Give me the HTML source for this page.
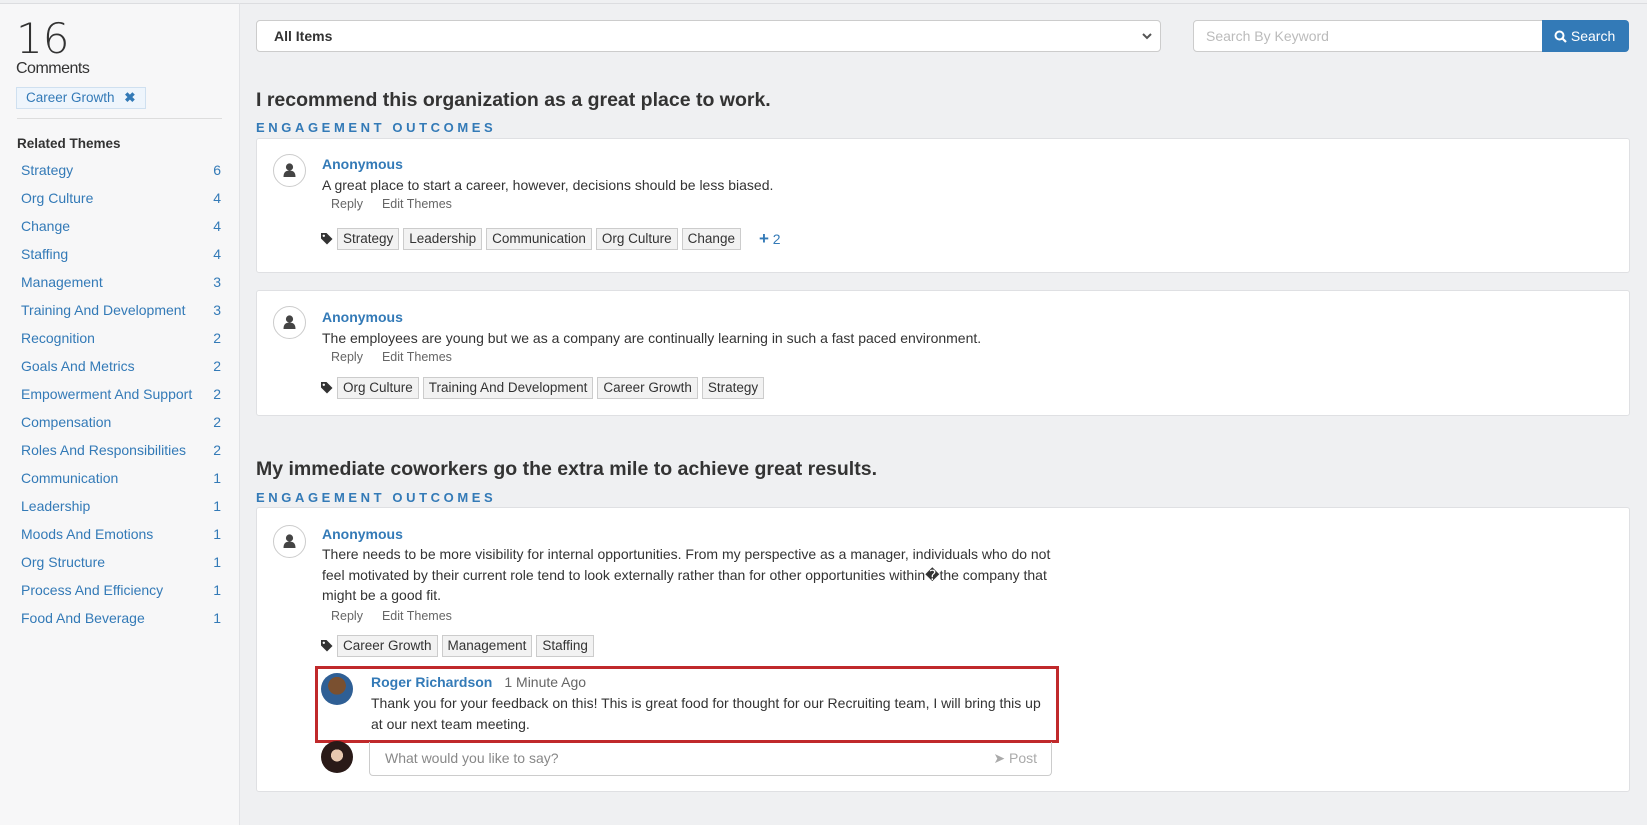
<!DOCTYPE html>
<html><head><meta charset="utf-8"><style>
*{box-sizing:border-box;margin:0;padding:0}
body{width:1647px;height:825px;overflow:hidden;background:#eff0f2;font-family:"Liberation Sans",sans-serif;color:#333;position:relative}
.abs{position:absolute}
#side{position:absolute;left:0;top:3px;width:240px;height:822px;background:#f7f7f8;border-right:1px solid #e2e3e6;border-top:1px solid #dcdde0}
#topline{position:absolute;left:0;top:3px;width:1647px;height:1px;background:#dcdde0}
.theme{position:absolute;left:21px;font-size:14px;color:#337ab7;width:200px}
.theme span{position:absolute;right:0;top:0}
.card{position:absolute;left:256px;width:1374px;background:#fff;border:1px solid #dfe0e3;border-radius:3px}
.av{position:absolute;width:33px;height:33px;border-radius:50%;border:1px solid #ccc;background:#fff}
.name{position:absolute;left:65px;font-weight:bold;color:#337ab7;font-size:14px}
.txt{position:absolute;left:65px;font-size:14px;color:#333;line-height:20.5px}
.acts{position:absolute;left:74px;font-size:12.5px;color:#666}
.acts b{font-weight:normal;margin-right:19px}
.tags{position:absolute;left:64px;display:flex;align-items:center;gap:4px}
.tag{font-size:13.5px;color:#333;background:#f2f2f2;border:1px solid #ccc;height:22px;line-height:20px;padding:0 5px}
h2{position:absolute;left:256px;font-size:19.5px;font-weight:bold;color:#333}
.eo{position:absolute;left:256px;font-size:13px;font-weight:bold;color:#337ab7;letter-spacing:3.6px}
</style></head><body>
<div id="topline"></div>
<div id="side">
<div class="abs" style="left:16px;top:10px;font-size:42px;color:#333;font-family:'DejaVu Sans ExtraLight','DejaVu Sans',sans-serif;font-weight:200">16</div>
<div class="abs" style="left:16px;top:56px;font-size:16px;letter-spacing:-0.5px">Comments</div>
<div class="abs" style="left:16px;top:83px;width:130px;height:22px;border:1px solid #cfe0f0;background:#eef5fc;color:#337ab7;font-size:13.5px;line-height:20px;padding-left:9px">Career Growth <span style="margin-left:6px;font-weight:bold">✖</span></div>
<div class="abs" style="left:17px;top:114px;width:205px;height:1px;background:#ddd"></div>
<div class="abs" style="left:17px;top:132px;font-size:13.5px;font-weight:bold;color:#333">Related Themes</div>
<div class="theme" style="top:158px">Strategy<span>6</span></div>
<div class="theme" style="top:186px">Org Culture<span>4</span></div>
<div class="theme" style="top:214px">Change<span>4</span></div>
<div class="theme" style="top:242px">Staffing<span>4</span></div>
<div class="theme" style="top:270px">Management<span>3</span></div>
<div class="theme" style="top:298px">Training And Development<span>3</span></div>
<div class="theme" style="top:326px">Recognition<span>2</span></div>
<div class="theme" style="top:354px">Goals And Metrics<span>2</span></div>
<div class="theme" style="top:382px">Empowerment And Support<span>2</span></div>
<div class="theme" style="top:410px">Compensation<span>2</span></div>
<div class="theme" style="top:438px">Roles And Responsibilities<span>2</span></div>
<div class="theme" style="top:466px">Communication<span>1</span></div>
<div class="theme" style="top:494px">Leadership<span>1</span></div>
<div class="theme" style="top:522px">Moods And Emotions<span>1</span></div>
<div class="theme" style="top:550px">Org Structure<span>1</span></div>
<div class="theme" style="top:578px">Process And Efficiency<span>1</span></div>
<div class="theme" style="top:606px">Food And Beverage<span>1</span></div>
</div>

<div class="abs" style="left:256px;top:20px;width:905px;height:32px;background:#fff;border:1px solid #ccc;border-radius:4px;font-size:14px;font-weight:bold;line-height:30px;padding-left:17px">All Items
<svg style="position:absolute;right:8px;top:12px" width="10" height="7" viewBox="0 0 10 7"><path d="M1 1l4 4 4-4" stroke="#555" stroke-width="2" fill="none"/></svg></div>
<div class="abs" style="left:1193px;top:20px;width:350px;height:32px;background:#fff;border:1px solid #ccc;border-radius:4px 0 0 4px;font-size:14px;color:#bbb;line-height:30px;padding-left:12px">Search By Keyword</div>
<div class="abs" style="left:1542px;top:20px;width:87px;height:32px;background:#337ab7;border-radius:0 4px 4px 0;color:#fff;font-size:14px;line-height:32px;padding-left:12px">
<svg width="13" height="13" viewBox="0 0 13 13" style="vertical-align:-2px"><circle cx="5.5" cy="5.5" r="4" stroke="#fff" stroke-width="2" fill="none"/><path d="M8.5 8.5l3.5 3.5" stroke="#fff" stroke-width="2.2"/></svg> Search</div>

<h2 style="top:89px">I recommend this organization as a great place to work.</h2>
<div class="eo" style="top:120px">ENGAGEMENT OUTCOMES</div>

<div class="card" style="top:138px;height:135px">
<div class="av" style="left:16px;top:15px"><svg width="31" height="31" viewBox="0 0 31 31"><circle cx="15.5" cy="12" r="3.6" fill="#444"/><path d="M9.5 22c0-5 2.5-6.5 6-6.5s6 1.5 6 6.5z" fill="#444"/></svg></div>
<div class="name" style="top:17px">Anonymous</div>
<div class="txt" style="top:36px">A great place to start a career, however, decisions should be less biased.</div>
<div class="acts" style="top:58px"><b>Reply</b><b>Edit Themes</b></div>
<div class="tags" style="top:89px"><svg width="12" height="12" viewBox="0 0 12 12"><path d="M0 0h5.5l6 6-5.5 5.5-6-6z" fill="#333"/><circle cx="2.8" cy="2.8" r="1.2" fill="#fff"/></svg><span class="tag">Strategy</span><span class="tag">Leadership</span><span class="tag">Communication</span><span class="tag">Org Culture</span><span class="tag">Change</span><span style="color:#337ab7;font-size:14px;margin-left:14px"><b style="font-size:17px">+</b> 2</span></div>
</div>

<div class="card" style="top:290px;height:126px">
<div class="av" style="left:16px;top:15px"><svg width="31" height="31" viewBox="0 0 31 31"><circle cx="15.5" cy="12" r="3.6" fill="#444"/><path d="M9.5 22c0-5 2.5-6.5 6-6.5s6 1.5 6 6.5z" fill="#444"/></svg></div>
<div class="name" style="top:18px">Anonymous</div>
<div class="txt" style="top:37px">The employees are young but we as a company are continually learning in such a fast paced environment.</div>
<div class="acts" style="top:59px"><b>Reply</b><b>Edit Themes</b></div>
<div class="tags" style="top:86px"><svg width="12" height="12" viewBox="0 0 12 12"><path d="M0 0h5.5l6 6-5.5 5.5-6-6z" fill="#333"/><circle cx="2.8" cy="2.8" r="1.2" fill="#fff"/></svg><span class="tag">Org Culture</span><span class="tag">Training And Development</span><span class="tag">Career Growth</span><span class="tag">Strategy</span></div>
</div>

<h2 style="top:458px">My immediate coworkers go the extra mile to achieve great results.</h2>
<div class="eo" style="top:490px">ENGAGEMENT OUTCOMES</div>

<div class="card" style="top:507px;height:285px">
<div class="av" style="left:16px;top:17px"><svg width="31" height="31" viewBox="0 0 31 31"><circle cx="15.5" cy="12" r="3.6" fill="#444"/><path d="M9.5 22c0-5 2.5-6.5 6-6.5s6 1.5 6 6.5z" fill="#444"/></svg></div>
<div class="name" style="top:18px">Anonymous</div>
<div class="txt" style="top:36px;width:745px">There needs to be more visibility for internal opportunities. From my perspective as a manager, individuals who do not feel motivated by their current role tend to look externally rather than for other opportunities within�the company that might be a good fit.</div>
<div class="acts" style="top:101px"><b>Reply</b><b>Edit Themes</b></div>
<div class="tags" style="top:127px"><svg width="12" height="12" viewBox="0 0 12 12"><path d="M0 0h5.5l6 6-5.5 5.5-6-6z" fill="#333"/><circle cx="2.8" cy="2.8" r="1.2" fill="#fff"/></svg><span class="tag">Career Growth</span><span class="tag">Management</span><span class="tag">Staffing</span></div>
<div class="abs" style="left:58px;top:158px;width:744px;height:77px;border:3px solid #c0292b"></div>
<div class="abs" style="left:64px;top:165px;width:32px;height:32px;border-radius:50%;background:radial-gradient(circle at 50% 40%,#7a5030 0 35%,#2f5f95 36% 100%)"></div>
<div class="abs" style="left:114px;top:166px;font-size:14px"><b style="color:#337ab7">Roger Richardson</b><span style="color:#666;margin-left:12px">1 Minute Ago</span></div>
<div class="txt" style="left:114px;top:185px;width:680px">Thank you for your feedback on this! This is great food for thought for our Recruiting team, I will bring this up at our next team meeting.</div>
<div class="abs" style="left:64px;top:233px;width:32px;height:32px;border-radius:50%;background:radial-gradient(circle at 50% 45%,#e8c8b0 0 25%,#2a1a18 26% 100%)"></div>
<div class="abs" style="left:112px;top:234px;width:683px;height:34px;border:1px solid #ccc;border-top:none;border-radius:0 0 4px 4px;font-size:14px;color:#888;line-height:32px;padding-left:15px">What would you like to say?<span style="position:absolute;right:14px;color:#aaa">➤ Post</span></div>
</div>
</body></html>
